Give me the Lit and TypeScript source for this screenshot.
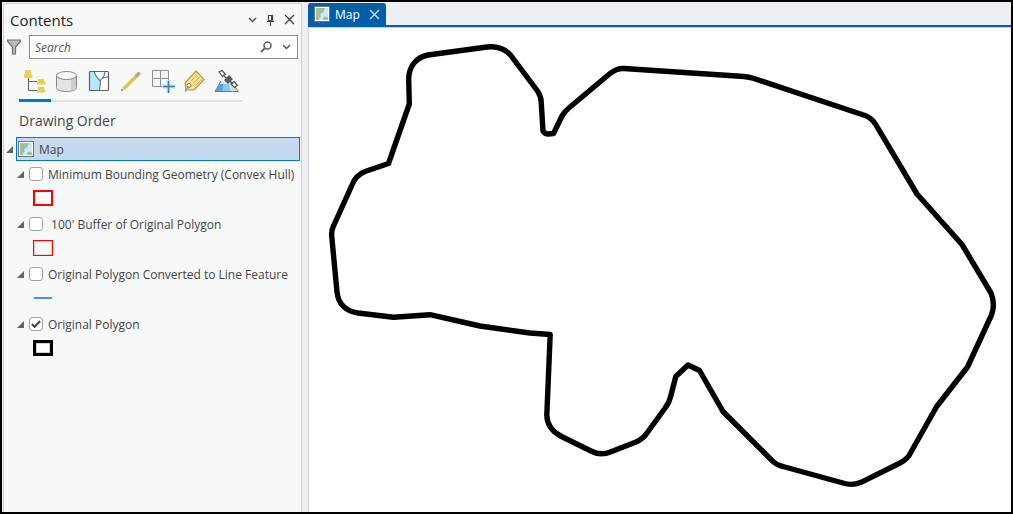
import { LitElement, html, css, svg, nothing, TemplateResult } from "lit";
import { customElement, property, state } from "lit/decorators.js";
import { classMap } from "lit/directives/class-map.js";

interface Layer {
  id: string;
  name: string;
  visible: boolean;
  symbol: "red-thick" | "red-thin" | "line" | "black";
}

const mapIcon = html`<svg width="16" height="16" viewBox="0 0 16 16" aria-hidden="true">
  <rect x="0.5" y="0.5" width="15" height="15" fill="#fff" stroke="#737373" />
  <rect x="2" y="2" width="12" height="12" fill="#cfe8f7" />
  <path d="M2 2h9l-1 2.500-1 2-2 1-1 1.500 1 1.500-1.500 1-.8 2.500H2z" fill="#97c29a" />
  <path d="M9 14v-2l2-1.500 2 .5 1 1V14z" fill="#97c29a" />
</svg>`;

const caret = html`<svg width="7" height="7" viewBox="0 0 7 7" aria-hidden="true">
  <path d="M7 0v7H0z" fill="#646464" />
</svg>`;

const chevron = html`<svg width="9" height="6" viewBox="0 0 9 6" aria-hidden="true">
  <path d="M1 1l3.500 3.500L8 1" fill="none" stroke="#555" stroke-width="1.500" />
</svg>`;

const cross = html`<svg width="11" height="11" viewBox="0 0 11 11" aria-hidden="true">
  <path d="M1 1l9 9M10 1l-9 9" fill="none" stroke="currentColor" stroke-width="1.400" />
</svg>`;

const viewTabs: { label: string; icon: TemplateResult }[] = [
  {
    label: "List By Drawing Order",
    icon: svg`
      <path d="M5.500 8v12.500H14M5.500 11.500H14" fill="none" stroke="#5e5e5e" />
      <path d="M2 0h6l.5 5h1v3H1V5h.5zM15 9h6l.5 3h1v2.500H14V12h.5zM15 17h6l.5 3h1v2.500H14V20h.5z" fill="#e6d24f" />`,
  },
  {
    label: "List By Data Source",
    icon: svg`
      <path d="M1.500 5.500v12c0 2.300 4.500 4 10 4s10-1.700 10-4v-12" fill="#e4e4e4" stroke="#858585" />
      <path d="M16 8.500l5-2v11.500l-5 2.800z" fill="#cecece" />
      <ellipse cx="11.500" cy="5.500" rx="10" ry="4" fill="#f6f6f6" stroke="#858585" />`,
  },
  {
    label: "List By Selection",
    icon: svg`
      <rect x="2.500" y="1.500" width="19" height="19" rx="1" fill="#fff" />
      <path d="M2.500 1.500H7L9 6l3 3.500 1.500 3-1 8h-10z" fill="#b3e7fa" />
      <path d="M7 1.500L9 6l3.500 4 1 2.500-1 8M13 11l2-2.500 3-1 3.500-1M15 8.500l2-3 1-4" fill="none" stroke="#6b7c84" stroke-width="1.200" />
      <rect x="2.500" y="1.500" width="19" height="19" rx="1" fill="none" stroke="#5f5f5f" stroke-width="1.200" />`,
  },
  {
    label: "List By Editing",
    icon: svg`
      <path d="M3 20l1-3L17 4l2.500 2.500L6.500 19.500z" fill="#dfc944" />
      <path d="M2 21l1.800-4L6.500 19.500z" fill="#e7c9a4" />
      <path d="M2 21l.8-2 1.200 1.200z" fill="#555" />
      <path d="M16 5l1.500-1.500 2.500 2.500L18.500 7.500z" fill="#9aa3a8" />
      <path d="M17.500 3.500L19 2l2 .2.500 2.300L20 6z" fill="#d98c86" />`,
  },
  {
    label: "List By Snapping",
    icon: svg`
      <path d="M1.500 0.500h16v16h-16zM9.500 0.500v16M1.500 8.500h16" fill="none" stroke="#8f8f8f" />
      <path d="M11 16.500h13M17.500 10v13" stroke="#b9e2f6" stroke-width="4" />
      <path d="M12 16.500h12M17.500 11v12" stroke="#3f7fa3" stroke-width="1.400" />`,
  },
  {
    label: "List By Labeling",
    icon: svg`
      <path d="M2 13L13 1l8 8.500L11 20H3z" fill="#f5e193" stroke="#bd9a4c" stroke-width="1.200" stroke-linejoin="round" />
      <path d="M8 11l6-6M10.500 13l6-6M13 15l5.500-5.500" stroke="#cdb05f" />
      <circle cx="6" cy="15.500" r="2" fill="#fff" stroke="#8c7440" />
      <path d="M5.500 16.500L2 21.500" stroke="#8d8d8d" stroke-width="1.200" />`,
  },
  {
    label: "List By Perspective Imagery",
    icon: svg`
      <path d="M6 11h11l6 11H0z" fill="#cfe9f6" />
      <path d="M4.500 14H9L7.500 22H0z" fill="#56a5df" />
      <path d="M9 14h5l2 8H7.500z" fill="#8cc9ee" />
      <path d="M15 14h4l4.500 8H17z" fill="#d3e6cd" />
      <path d="M6 11L0 21.500h23.500L20 17" fill="none" stroke="#777" />
      <path d="M4 2l3-1.500 3.500 4-3 2zM16 14l3-2.500 3.500 4-3 2z" fill="#fff" stroke="#555" stroke-width="1.200" />
      <path d="M8 5l10 9" stroke="#555" stroke-width="1.400" />
      <path d="M9 10l5-5 4 4-5 5z" fill="#5b5b5b" />`,
  },
];

const symbols: Record<Layer["symbol"], TemplateResult> = {
  "red-thick": svg`<rect x="1" y="1" width="18" height="14" fill="#fbfbfb" stroke="#f00" stroke-width="2" />`,
  "red-thin": svg`
    <rect x="1" y="1" width="18" height="14" fill="#fbfbfb" stroke="#f99" />
    <rect x="0.5" y="0.5" width="19" height="15" fill="none" stroke="#f00" />`,
  line: svg`<path d="M1 8h18" stroke="#3f93f5" stroke-width="2" />`,
  black: svg`
    <rect x="3" y="3" width="14" height="10" fill="#fff" stroke="#aaa" />
    <rect x="1.500" y="1.500" width="17" height="13" fill="none" stroke="#000" stroke-width="3" />`,
};

@customElement("layer-row")
class LayerRow extends LitElement {
  @property({ attribute: false }) layer!: Layer;
  @state() private open = true;

  static styles = css`
    :host { display: block; height: 50px; }
    .row { display: flex; align-items: center; height: 26px; gap: 5px; }
    .toggle { display: flex; width: 7px; padding: 0; border: 0; background: none; }
    .check { display: grid; place-items: center; width: 14px; height: 14px; }
    .check > * { grid-area: 1 / 1; }
    .box {
      appearance: none; box-sizing: border-box; margin: 0; width: 14px; height: 14px;
      border: 1px solid #a3a3a3; border-radius: 3px; background: #fff;
    }
    .tick { pointer-events: none; }
    .name { color: #444; white-space: pre; }
    .symbol { display: block; margin-left: 16px; padding-top: 3px; }
  `;

  private toggleVisible(e: Event) {
    const visible = (e.target as HTMLInputElement).checked;
    this.dispatchEvent(
      new CustomEvent("visibility", { detail: { id: this.layer.id, visible }, bubbles: true, composed: true })
    );
  }

  render() {
    const l = this.layer;
    return html`
      <div class="row">
        <button class="toggle" aria-label="Expand layer" aria-expanded=${this.open} @click=${() => (this.open = !this.open)}>${caret}</button>
        <span class="check">
          <input class="box" id="visible" type="checkbox" .checked=${l.visible} @change=${this.toggleVisible} />
          ${l.visible
            ? html`<svg class="tick" width="10" height="8" viewBox="0 0 10 8"><path d="M.8 4l2.800 2.800L9.200 1" fill="none" stroke="#444" stroke-width="2" /></svg>`
            : nothing}
        </span>
        <label class="name" for="visible">${l.name}</label>
      </div>
      ${this.open ? html`<svg class="symbol" width="20" height="16" viewBox="0 0 20 16">${symbols[l.symbol]}</svg>` : nothing}
    `;
  }
}

@customElement("contents-pane")
class ContentsPane extends LitElement {
  @property({ attribute: false }) layers: Layer[] = [];
  @state() private view = 0;

  static styles = css`
    :host {
      display: flex; flex-direction: column; box-sizing: border-box; min-height: 0; overflow: hidden;
      border: 1px solid #cfd0d3; border-bottom: 0; border-radius: 3px 3px 0 0; background: #f7f9f8;
    }
    button { display: flex; align-items: center; justify-content: center; padding: 0; border: 0; background: none; color: #444; }
    .header { display: flex; align-items: center; height: 31px; padding: 0 6px; gap: 8px; }
    .title { flex: 1; margin: 0; font-size: 15px; font-weight: 400; color: #222; }
    .search { display: flex; align-items: center; gap: 8px; padding: 0 3px; }
    .field { display: flex; flex: 1; box-sizing: border-box; height: 24px; border: 1px solid #8f8f8f; background: #fff; }
    .text {
      flex: 1; min-width: 0; padding: 0 5px; border: 0; outline: 0; background: none;
      font: italic 12px "Open Sans", "Noto Sans", sans-serif; color: #333;
    }
    .text::placeholder { color: #555; opacity: 1; }
    .field button { width: 21px; }
    .views { display: flex; align-self: flex-start; margin: 4px 0 0 15px; box-shadow: inset 0 -2px #e0e2e2; }
    .view { box-sizing: border-box; width: 32px; height: 39px; padding-top: 2px; border-bottom: 3px solid transparent; }
    .view.active { border-bottom-color: #007ac2; }
    .heading { margin: 8px 0 5px 15px; font-size: 14px; line-height: 22px; font-weight: 400; color: #444; }
    .root { display: flex; align-items: center; gap: 3px; padding: 0 1px 0 2px; }
    .root .toggle { width: 7px; }
    .selected {
      display: flex; flex: 1; align-items: center; gap: 5px; box-sizing: border-box; height: 24px; padding: 0 1px;
      border: 1px solid #007ac2; background: #c5daee; color: #444;
    }
    .layers { margin: 0; padding: 0 0 0 13px; list-style: none; }
  `;

  render() {
    return html`
      <header class="header">
        <h1 class="title">Contents</h1>
        <button aria-label="Pane options">${chevron}</button>
        <button aria-label="Pin pane">
          <svg width="11" height="12" viewBox="0 0 11 12"><path d="M3.500 1.500h4v5h-4zM2 7.500h7M5.500 8v4" fill="none" stroke="#444" stroke-width="1.200" /><path d="M6 1h2v6H6z" fill="#444" /></svg>
        </button>
        <button aria-label="Close pane">${cross}</button>
      </header>
      <div class="search">
        <svg width="14" height="18" viewBox="0 0 14 18"><path d="M.7 2h12.600v1.500L8.500 9v7h-3V9L.7 3.500z" fill="#bdbdbd" stroke="#6e6e6e" stroke-width="1.200" /></svg>
        <div class="field">
          <input class="text" type="text" aria-label="Search" placeholder="Search" />
          <button aria-label="Run search">
            <svg width="12" height="12" viewBox="0 0 12 12"><circle cx="7.500" cy="4.500" r="3.500" fill="none" stroke="#666" stroke-width="1.600" /><path d="M5 7L1 11" stroke="#666" stroke-width="2" /></svg>
          </button>
          <button aria-label="Search options">${chevron}</button>
        </div>
      </div>
      <nav class="views" aria-label="Contents views">
        ${viewTabs.map(
          (t, i) => html`<button class=${classMap({ view: true, active: i === this.view })} aria-label=${t.label} @click=${() => (this.view = i)}>
            <svg width="24" height="24" viewBox="0 0 24 24">${t.icon}</svg>
          </button>`
        )}
      </nav>
      <h2 class="heading">Drawing Order</h2>
      <div class="root">
        <button class="toggle" aria-label="Expand map">${caret}</button>
        <div class="selected">${mapIcon}<span>Map</span></div>
      </div>
      <ul class="layers">
        ${this.layers.map((l) => html`<li><layer-row .layer=${l}></layer-row></li>`)}
      </ul>
    `;
  }
}

@customElement("map-view")
class MapView extends LitElement {
  @property({ type: Boolean }) outline = true;

  static styles = css`
    :host { display: flex; flex-direction: column; min-width: 0; min-height: 0; }
    .tabs { display: flex; padding-top: 1px; border-bottom: 2px solid #005fa8; }
    .tab {
      display: flex; align-items: center; box-sizing: border-box; height: 22px; padding: 0 6px; gap: 5px;
      border-radius: 3px 3px 0 0; background: #005fa8; color: #fff;
    }
    .close { display: flex; margin-left: 4px; padding: 0; border: 0; background: none; color: #cfe0ef; }
    .canvas { flex: 1; min-height: 0; border: 1px solid #cfd0d3; border-width: 1px 0 0 1px; background: #fff; }
    .drawing { display: block; width: 100%; height: 100%; }
  `;

  render() {
    return html`
      <div class="tabs">
        <div class="tab">${mapIcon}<span>Map</span><button class="close" aria-label="Close map">${cross}</button></div>
      </div>
      <div class="canvas">
        <svg class="drawing" viewBox="309 28 702 484" role="img" aria-label="Original Polygon">
          ${this.outline
            ? svg`<path fill="none" stroke="#000" stroke-width="5.400" stroke-linejoin="round" d="
              M409.300 104L408.700 79C408.700 66 417 57 428 55L487 47C496 46 505 49 510.500 55L537.500 91
              Q541 96 541.200 102L543 131Q545 134 548 134L553.500 133.500L562 116Q565 111 570 107L610 73.500
              Q617 68 624 68.500L744 76.500Q749 77 754 78.500L865 115.500Q872 118 876 125L917 194L962 244.500
              L991 293Q995.500 304 991.500 315L967.500 367L936.700 406.500L911 452Q908 459 900 463L861 482.300
              Q852 486 843 483L783 466.500Q776 465 771 459.500L723 411.500L699.500 370.500L688 365L675.800 376.500
              L670.500 397Q669 403 665.500 407.500L647 433Q643 439 636 442L611 451.700Q601 456 592 451.500
              L561.500 436.500Q547 429 546.800 415L550.200 334.500L530 333L480 326L430 314.700L393.500 317.200L358 313
              Q339 310 337 292L331.800 237Q331 231 333.500 226L352 185Q356 175 365 171.500L388.500 163.500Z" />`
            : nothing}
        </svg>
      </div>
    `;
  }
}

@customElement("app-root")
class AppRoot extends LitElement {
  @state() private layers: Layer[] = [
    { id: "hull", name: "Minimum Bounding Geometry (Convex Hull)", visible: false, symbol: "red-thick" },
    { id: "buffer", name: " 100' Buffer of Original Polygon", visible: false, symbol: "red-thin" },
    { id: "line", name: "Original Polygon Converted to Line Feature", visible: false, symbol: "line" },
    { id: "polygon", name: "Original Polygon", visible: true, symbol: "black" },
  ];

  static styles = css`
    :host {
      display: grid; grid-template-columns: 299px minmax(0, 1fr); grid-template-rows: minmax(0, 1fr); gap: 6px;
      box-sizing: border-box; height: 100vh; padding-left: 1px; border: 2px solid #000; background: #eeeff2;
      font: 12px "Open Sans", "Noto Sans", sans-serif;
    }
    .contents { margin-top: 1px; }
  `;

  private setVisible(e: CustomEvent<{ id: string; visible: boolean }>) {
    this.layers = this.layers.map((l) => (l.id === e.detail.id ? { ...l, visible: e.detail.visible } : l));
  }

  render() {
    return html`
      <contents-pane class="contents" .layers=${this.layers} @visibility=${this.setVisible}></contents-pane>
      <map-view .outline=${this.layers[3].visible}></map-view>
    `;
  }
}
